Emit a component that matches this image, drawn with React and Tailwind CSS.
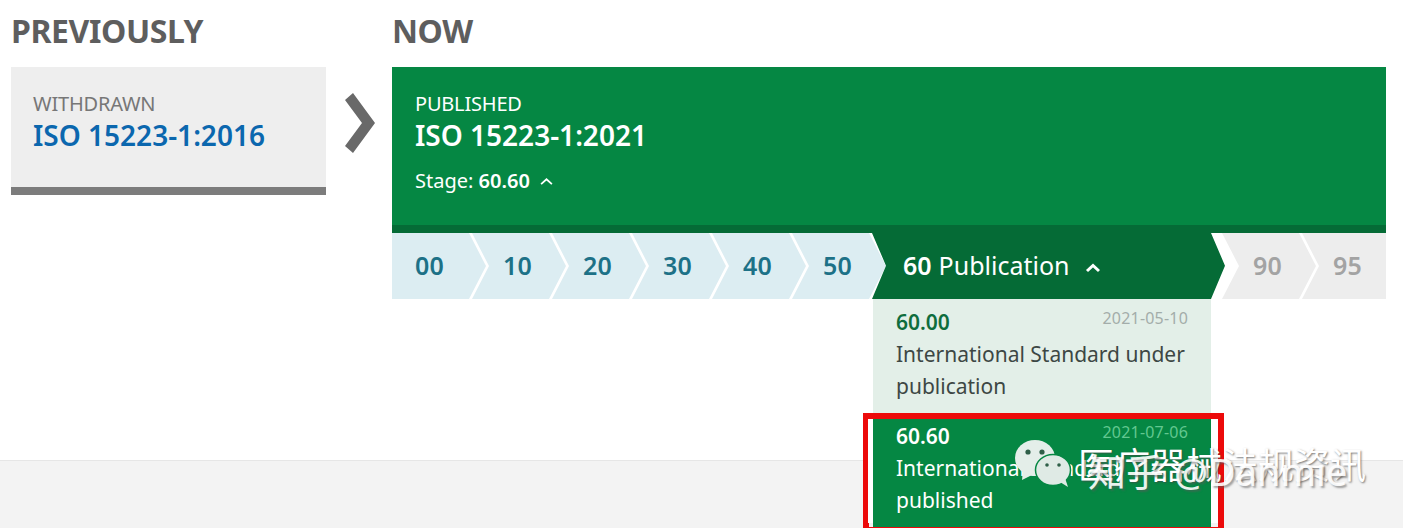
import React from "react";

const notch = "[clip-path:polygon(0_0,calc(100%-17px)_0,100%_50%,calc(100%-17px)_100%,0_100%,17px_50%)]";

function Stage({ n, gray }) {
  return (
    <div className={`h-full w-[94px] -ml-[14px] pl-[31px] flex items-center text-[25px] font-semibold tracking-[0.2px] ${notch} ${gray ? "bg-[#ededed] text-[#a3a3a3]" : "bg-[#dcedf2] text-[#1d7187]"}`}>
      {n}
    </div>
  );
}

function Up({ className, w = 2.5 }) {
  return (
    <svg viewBox="0 0 16 10" className={className} fill="none" stroke="currentColor" strokeWidth={w}>
      <path d="M2 8 L8 2.5 L14 8" />
    </svg>
  );
}

function Row({ code, date, lines, active }) {
  return (
    <div className={`px-[23px] pt-[8px] ${active ? "bg-[#058743] text-white h-[114px]" : "bg-[#e3efe8] text-[#3d4744] h-[114px]"}`}>
      <div className="flex justify-between items-start">
        <span className={`text-[21px] leading-[30px] font-semibold ${active ? "text-white" : "text-[#0f6d3d]"}`}>{code}</span>
        <span className={`text-[16px] leading-[22px] tracking-[0.2px] ${active ? "text-[#62c790]" : "text-[#a3adaa]"}`}>{date}</span>
      </div>
      <div className="text-[21px] leading-[32px] mt-[1px]">{lines.map((l) => <div key={l} className="whitespace-nowrap">{l}</div>)}</div>
    </div>
  );
}

export default function App() {
  return (
    <div className="relative h-[528px] w-[1403px] overflow-hidden bg-white flex flex-col font-['Noto_Sans','Noto_Sans_CJK_SC',sans-serif]">
      <div className="h-[460px] shrink-0 pl-[11px] pr-[17px] flex">
        <div className="w-[315px] shrink-0">
          <h2 className="h-[67px] text-[32px] leading-[62px] font-bold text-[#5e5e5e] tracking-[-0.4px]">PREVIOUSLY</h2>
          <div className="h-[128px] bg-[#eeeeee] border-b-[8px] border-[#7c7c7c] pl-[22px] pt-[24px]">
            <div className="text-[20px] leading-[26px] text-[#777777] tracking-[-0.2px]">WITHDRAWN</div>
            <div className="text-[28px] leading-[36px] font-semibold text-[#0b67ae]">ISO 15223-1:2016</div>
          </div>
        </div>
        <div className="w-[66px] shrink-0 pt-[93px] pl-[19px]">
          <svg width="30" height="60" viewBox="0 0 30 60" className="text-[#696969]" fill="currentColor">
            <path d="M0 7 L8 0 L30 30 L8 60 L0 53 L17 30 Z" />
          </svg>
        </div>
        <div className="flex-1 min-w-0">
          <h2 className="h-[67px] text-[32px] leading-[62px] font-bold text-[#5e5e5e] tracking-[-0.4px]">NOW</h2>
          <div className="h-[166px] bg-[#058743] border-b-[8px] border-[#056b36] pl-[23px] pt-[24px] text-white">
            <div className="text-[20px] leading-[26px] tracking-[-0.2px]">PUBLISHED</div>
            <div className="text-[28px] leading-[36px] font-semibold">ISO 15223-1:2021</div>
            <div className="flex items-center gap-[9px] mt-[14px] text-[20px] leading-[28px]">
              <span>Stage: <span className="font-semibold">60.60</span></span>
              <Up className="w-[15px] h-[9px]" w={2} />
            </div>
          </div>
          <div className="h-[66px] flex relative">
            <div className="h-full w-[94px] pl-[23px] flex items-center text-[25px] font-semibold tracking-[0.2px] bg-[#dcedf2] text-[#1d7187] [clip-path:polygon(0_0,calc(100%-17px)_0,100%_50%,calc(100%-17px)_100%,0_100%)]">00</div>
            <Stage n="10" />
            <Stage n="20" />
            <Stage n="30" />
            <Stage n="40" />
            <Stage n="50" />
            <div className="w-[353px] h-[74px] -mt-[8px] -ml-[14px] shrink-0 bg-[#056b36] text-white flex items-center pl-[31px] pt-[8px] text-[25px] [clip-path:polygon(0_100%,14px_56%,0_100%,0_100%,0_100%)] hidden" />
            <div className="relative w-[353px] h-[74px] -mt-[8px] -ml-[14px] shrink-0 bg-[#056b36] text-white flex items-center pl-[31px] pt-[8px] text-[25px] [clip-path:polygon(0_0,calc(100%-14px)_0,calc(100%-14px)_8px,100%_55%,calc(100%-14px)_100%,0_100%,14px_55%,0_8px)]">
              <span className="font-semibold mr-[7px]">60</span>
              <span>Publication</span>
              <Up className="w-[16px] h-[10px] ml-[15px] mt-[3px]" w={3} />
            </div>
            <div className="w-[11px] shrink-0" />
            <Stage n="90" gray />
            <div className="h-full flex-1 -ml-[14px] pl-[31px] flex items-center text-[25px] font-semibold tracking-[0.2px] bg-[#ededed] text-[#a3a3a3] [clip-path:polygon(0_0,100%_0,100%_100%,0_100%,17px_50%)]">95</div>
          </div>
        </div>
      </div>
      <div className="flex-1 bg-[#f3f3f3] border-t border-[#e6e6e6]" />

      <div className="absolute left-[873px] top-[299px] w-[338px] h-[229px]">
        <Row code="60.00" date="2021-05-10" lines={["International Standard under", "publication"]} />
        <Row code="60.60" date="2021-07-06" lines={["International Standard", "published"]} active />
      </div>

      <div className="absolute left-[863px] top-[413px] w-[361px] h-[120px] border-[6px] border-[#ec0a0a] pointer-events-none" />
      <div className="absolute left-[868px] top-[419px] w-[5px] h-[104px] bg-white" />
      <div className="absolute left-[1211px] top-[419px] w-[7px] h-[104px] bg-white" />

      <svg className="absolute left-[1014px] top-[438px]" width="60" height="50" viewBox="0 0 60 50">
        <ellipse cx="21" cy="20" rx="20" ry="18" fill="#e4eee9" />
        <path d="M9 32 L8 42 L20 36 Z" fill="#e4eee9" />
        <ellipse cx="39" cy="32" rx="17.5" ry="15.5" fill="#dfeae5" stroke="#058743" strokeWidth="1.5" />
        <path d="M46 44 L54 49 L51 40 Z" fill="#dfeae5" />
        <circle cx="14" cy="14" r="2.6" fill="#2f5f48" />
        <circle cx="28" cy="14" r="2.6" fill="#2f5f48" />
        <circle cx="33" cy="27" r="1.8" fill="#2f5f48" />
        <circle cx="45" cy="27" r="1.8" fill="#2f5f48" />
      </svg>
      <div className="absolute left-[1078px] top-[441px] text-[36px] leading-[50px] whitespace-nowrap text-white [text-shadow:1px_1px_2px_rgba(70,70,70,0.7)]">医疗器械法规资讯</div>
      <div className="absolute left-[1088px] top-[446px] text-[38px] leading-[50px] whitespace-nowrap text-white/90 [text-shadow:2px_2px_2px_rgba(90,90,90,0.55)]">知乎 @Danmie</div>
    </div>
  );
}
